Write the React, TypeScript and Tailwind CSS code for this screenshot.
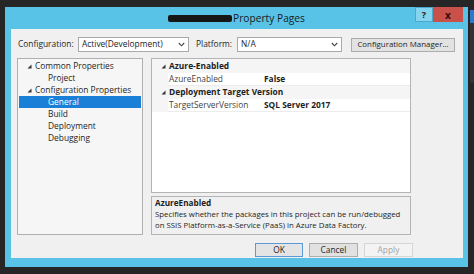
import React from "react";

function Chevron() {
  return (
    <svg width="7" height="5" viewBox="0 0 7 5" className="shrink-0">
      <path d="M0.8 1 L3.5 3.8 L6.2 1" fill="none" stroke="#444" strokeWidth="1.1" />
    </svg>
  );
}

function Tri() {
  return (
    <svg width="5" height="5" viewBox="0 0 5 5" className="shrink-0">
      <path d="M4.5 0.5 L4.5 4.5 L0.5 4.5 Z" fill="#333" />
    </svg>
  );
}

function TreeRow({ label, level, selected }: { label: string; level: number; selected?: boolean }) {
  return (
    <div
      className={
        "h-[12px] flex items-center mx-[1px] whitespace-nowrap " +
        (selected ? "bg-[#1a7fd6] text-white" : "text-[#1e1e1e]")
      }
    >
      {level === 0 ? (
        <>
          <div className="w-[8px]" />
          <Tri />
          <div className="w-[3px]" />
          <span>{label}</span>
        </>
      ) : (
        <>
          <div className="w-[29px]" />
          <span>{label}</span>
        </>
      )}
    </div>
  );
}

function CatRow({ label }: { label: string }) {
  return (
    <div className="h-[13px] flex items-center bg-[#f5f5f5] font-bold text-[#1e1e1e] whitespace-nowrap">
      <div className="w-[9px]" />
      <Tri />
      <div className="w-[3px]" />
      <span>{label}</span>
    </div>
  );
}

function PropRow({ name, value }: { name: string; value: string }) {
  return (
    <div className="h-[13px] flex items-center bg-[#f5f5f5] whitespace-nowrap">
      <div className="w-[16px] h-full" />
      <div className="flex-1 h-full flex items-center bg-white border-b border-[#ececec]">
        <span className="w-[96px] pl-[1px] text-[#444]">{name}</span>
        <span className="font-bold text-[#1e1e1e]">{value}</span>
      </div>
    </div>
  );
}

export default function App() {
  return (
    <div className="relative w-[474px] h-[274px] bg-[#262626] overflow-hidden font-['Open_Sans',sans-serif] text-[8.4px] leading-none">
      <div className="pt-[7px] pl-[5px]">
        <div className="w-[463px] h-[260px] bg-[#58c3e7] flex flex-col">
          {/* title bar */}
          <div className="h-[22px] flex items-start">
            <div className="w-[53px]" />
            <div className="flex-1 h-full flex items-center justify-center">
              <div className="w-[64px] h-[7px] rounded-[2px] bg-[#161616] mr-[1px]" />
              <span className="text-[10.2px] text-[#1a1a1a] whitespace-nowrap">Property Pages</span>
            </div>
            <div className="w-[18px] h-[15px] bg-[#86d4ef] border border-[#4ba9cc] flex items-center justify-center text-[9px] font-bold text-[#1a1a1a]">
              ?
            </div>
            <div className="w-[30px] h-[15px] bg-[#c9514a] flex items-center justify-center text-[10px] font-bold text-[#2a1010]">
              x
            </div>
            <div className="w-[5px]" />
          </div>

          {/* content */}
          <div className="ml-[6px] w-[452px] h-[229px] bg-[#f0f0f0] flex flex-col text-[#1e1e1e]">
            {/* row 1 */}
            <div className="mt-[8px] h-[15px] flex items-center whitespace-nowrap">
              <span className="ml-[7px] w-[60px]">Configuration:</span>
              <div className="w-[111px] h-[15px] bg-white border border-[#a9a9a9] flex items-center pl-[3px] pr-[3px]">
                <span className="flex-1">Active(Development)</span>
                <Chevron />
              </div>
              <span className="ml-[7px] w-[41px]">Platform:</span>
              <div className="w-[105px] h-[15px] bg-white border border-[#a9a9a9] flex items-center pl-[3px] pr-[3px]">
                <span className="flex-1">N/A</span>
                <Chevron />
              </div>
              <div className="ml-[9px] w-[104px] h-[14px] bg-[#e2e2e2] border border-[#acacac] flex items-center justify-center text-[7.9px]">
                Configuration Manager...
              </div>
            </div>

            {/* main */}
            <div className="mt-[6px] h-[177px] flex pl-[6px] gap-[8px]">
              <div className="w-[126px] h-full bg-[#f6f6f6] border border-[#b0b0b0] pt-[1px]">
                <TreeRow label="Common Properties" level={0} />
                <TreeRow label="Project" level={1} />
                <TreeRow label="Configuration Properties" level={0} />
                <TreeRow label="General" level={1} selected />
                <TreeRow label="Build" level={1} />
                <TreeRow label="Deployment" level={1} />
                <TreeRow label="Debugging" level={1} />
              </div>
              <div className="w-[260px] h-full flex flex-col">
                <div className="h-[135px] bg-white border border-[#b4b4b4] flex flex-col">
                  <div className="h-[1px] bg-[#f5f5f5]" />
                  <CatRow label="Azure-Enabled" />
                  <PropRow name="AzureEnabled" value="False" />
                  <CatRow label="Deployment Target Version" />
                  <PropRow name="TargetServerVersion" value="SQL Server 2017" />
                </div>
                <div className="mt-[3px] h-[39px] bg-[#f0f0f0] border border-[#b4b4b4] pl-[3px] flex flex-col whitespace-nowrap text-[7.8px]">
                  <div className="h-[12px] flex items-center font-bold text-[8.2px]">AzureEnabled</div>
                  <div className="h-[11px] flex items-center">
                    Specifies whether the packages in this project can be run/debugged
                  </div>
                  <div className="h-[11px] flex items-center">
                    on SSIS Platform-as-a-Service (PaaS) in Azure Data Factory.
                  </div>
                </div>
              </div>
            </div>

            {/* buttons */}
            <div className="mt-[8px] h-[14px] flex ml-[244px] gap-[6px]">
              <div className="w-[48px] h-[14px] bg-[#e4e4e4] border border-[#5b9bd5] flex items-center justify-center">
                OK
              </div>
              <div className="w-[49px] h-[14px] bg-[#e1e1e1] border border-[#adadad] flex items-center justify-center">
                Cancel
              </div>
              <div className="w-[49px] h-[14px] bg-[#f3f3f3] border border-[#d6d6d6] flex items-center justify-center text-[#a3a3a3]">
                Apply
              </div>
            </div>
          </div>
        </div>
      </div>
      <div className="absolute right-0 top-[10px] w-[4px] h-[13px] bg-[#2b78cf]" />
      <div className="absolute right-0 top-[23px] w-[4px] h-[60px] bg-[#333]" />
    </div>
  );
}
